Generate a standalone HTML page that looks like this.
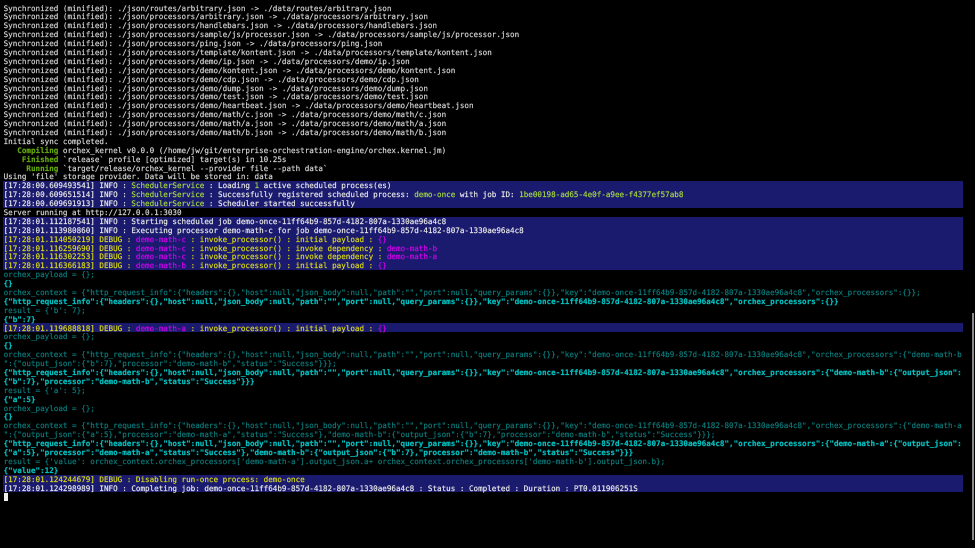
<!DOCTYPE html>
<html><head><meta charset="utf-8"><style>
html,body{margin:0;padding:0;background:#000;width:975px;height:548px;overflow:hidden}
#t{position:absolute;left:3.6px;top:4.5px;width:965px;font-family:"DejaVu Sans Mono","Liberation Mono",monospace;font-size:7.59px;line-height:8.9px;color:#d4d4d4;text-rendering:geometricPrecision;-webkit-text-stroke:.18px;filter:blur(.2px)}
#t div{height:8.9px;white-space:pre}
.bar{position:absolute;left:3px;width:960px;background:#1a1a6e}
.g{color:#62a80c;font-weight:bold}
.l{color:#a4d840}
.w{color:#e8e8e8}
.y{color:#dcdc14}
.m{color:#d400ee}
.d{color:#0b7c7c}
.c{color:#00c0c0;font-weight:bold}
</style></head><body>
<div class="bar" style="top:181px;height:26.7px"></div>
<div class="bar" style="top:216.6px;height:53.4px"></div>
<div class="bar" style="top:323px;height:8.9px"></div>
<div class="bar" style="top:474.5px;height:17.8px"></div>
<div style="position:absolute;left:4px;top:492.5px;width:4px;height:8.5px;background:#f0f0f0"></div>
<div style="position:absolute;left:972px;top:313px;width:1.5px;height:227px;background:#8a8a8a"></div>
<div id="t">
<div>Synchronized (minified): ./json/routes/arbitrary.json -&gt; ./data/routes/arbitrary.json</div>
<div>Synchronized (minified): ./json/processors/arbitrary.json -&gt; ./data/processors/arbitrary.json</div>
<div>Synchronized (minified): ./json/processors/handlebars.json -&gt; ./data/processors/handlebars.json</div>
<div>Synchronized (minified): ./json/processors/sample/js/processor.json -&gt; ./data/processors/sample/js/processor.json</div>
<div>Synchronized (minified): ./json/processors/ping.json -&gt; ./data/processors/ping.json</div>
<div>Synchronized (minified): ./json/processors/template/kontent.json -&gt; ./data/processors/template/kontent.json</div>
<div>Synchronized (minified): ./json/processors/demo/ip.json -&gt; ./data/processors/demo/ip.json</div>
<div>Synchronized (minified): ./json/processors/demo/kontent.json -&gt; ./data/processors/demo/kontent.json</div>
<div>Synchronized (minified): ./json/processors/demo/cdp.json -&gt; ./data/processors/demo/cdp.json</div>
<div>Synchronized (minified): ./json/processors/demo/dump.json -&gt; ./data/processors/demo/dump.json</div>
<div>Synchronized (minified): ./json/processors/demo/test.json -&gt; ./data/processors/demo/test.json</div>
<div>Synchronized (minified): ./json/processors/demo/heartbeat.json -&gt; ./data/processors/demo/heartbeat.json</div>
<div>Synchronized (minified): ./json/processors/demo/math/c.json -&gt; ./data/processors/demo/math/c.json</div>
<div>Synchronized (minified): ./json/processors/demo/math/a.json -&gt; ./data/processors/demo/math/a.json</div>
<div>Synchronized (minified): ./json/processors/demo/math/b.json -&gt; ./data/processors/demo/math/b.json</div>
<div>Initial sync completed.</div>
<div>   <span class="g">Compiling</span> orchex_kernel v0.0.0 (/home/jw/git/enterprise-orchestration-engine/orchex.kernel.jm)</div>
<div>    <span class="g">Finished</span> `release` profile [optimized] target(s) in 10.25s</div>
<div>     <span class="g">Running</span> `target/release/orchex_kernel --provider file --path data`</div>
<div>Using 'file' storage provider. Data will be stored in: data</div>
<div class="w">[17:28:00.609493541] INFO : <span class="l">SchedulerService</span> : Loading <span class="l">1</span> active scheduled process(es)</div>
<div class="w">[17:28:00.609651514] INFO : <span class="l">SchedulerService</span> : Successfully registered scheduled process: <span class="l">demo-once</span> with job ID: <span class="l">1be00198-ad65-4e0f-a9ee-f4377ef57ab8</span></div>
<div class="w">[17:28:00.609691913] INFO : <span class="l">SchedulerService</span> : Scheduler started successfully</div>
<div>Server running at http://127.0.0.1:3030</div>
<div class="w">[17:28:01.112187541] INFO : Starting scheduled job demo-once-11ff64b9-857d-4182-807a-1330ae96a4c8</div>
<div class="w">[17:28:01.113980860] INFO : Executing processor demo-math-c for job demo-once-11ff64b9-857d-4182-807a-1330ae96a4c8</div>
<div class="y">[17:28:01.114050219] DEBUG : <span class="m">demo-math-c</span> : invoke_processor() : initial payload : <span class="m">{}</span></div>
<div class="y">[17:28:01.116259690] DEBUG : <span class="m">demo-math-c</span> : invoke_processor() : invoke dependency : <span class="m">demo-math-b</span></div>
<div class="y">[17:28:01.116302253] DEBUG : <span class="m">demo-math-c</span> : invoke_processor() : invoke dependency : <span class="m">demo-math-a</span></div>
<div class="y">[17:28:01.116366183] DEBUG : <span class="m">demo-math-b</span> : invoke_processor() : initial payload : <span class="m">{}</span></div>
<div class="d">orchex_payload = {};</div>
<div class="c">{}</div>
<div class="d">orchex_context = {"http_request_info":{"headers":{},"host":null,"json_body":null,"path":"","port":null,"query_params":{}},"key":"demo-once-11ff64b9-857d-4182-807a-1330ae96a4c8","orchex_processors":{}};</div>
<div class="c">{"http_request_info":{"headers":{},"host":null,"json_body":null,"path":"","port":null,"query_params":{}},"key":"demo-once-11ff64b9-857d-4182-807a-1330ae96a4c8","orchex_processors":{}}</div>
<div class="d">result = {'b': 7};</div>
<div class="c">{"b":7}</div>
<div class="y">[17:28:01.119688818] DEBUG : <span class="m">demo-math-a</span> : invoke_processor() : initial payload : <span class="m">{}</span></div>
<div class="d">orchex_payload = {};</div>
<div class="c">{}</div>
<div class="d">orchex_context = {"http_request_info":{"headers":{},"host":null,"json_body":null,"path":"","port":null,"query_params":{}},"key":"demo-once-11ff64b9-857d-4182-807a-1330ae96a4c8","orchex_processors":{"demo-math-b</div>
<div class="d">":{"output_json":{"b":7},"processor":"demo-math-b","status":"Success"}}};</div>
<div class="c">{"http_request_info":{"headers":{},"host":null,"json_body":null,"path":"","port":null,"query_params":{}},"key":"demo-once-11ff64b9-857d-4182-807a-1330ae96a4c8","orchex_processors":{"demo-math-b":{"output_json":</div>
<div class="c">{"b":7},"processor":"demo-math-b","status":"Success"}}}</div>
<div class="d">result = {'a': 5};</div>
<div class="c">{"a":5}</div>
<div class="d">orchex_payload = {};</div>
<div class="c">{}</div>
<div class="d">orchex_context = {"http_request_info":{"headers":{},"host":null,"json_body":null,"path":"","port":null,"query_params":{}},"key":"demo-once-11ff64b9-857d-4182-807a-1330ae96a4c8","orchex_processors":{"demo-math-a</div>
<div class="d">":{"output_json":{"a":5},"processor":"demo-math-a","status":"Success"},"demo-math-b":{"output_json":{"b":7},"processor":"demo-math-b","status":"Success"}}};</div>
<div class="c">{"http_request_info":{"headers":{},"host":null,"json_body":null,"path":"","port":null,"query_params":{}},"key":"demo-once-11ff64b9-857d-4182-807a-1330ae96a4c8","orchex_processors":{"demo-math-a":{"output_json":</div>
<div class="c">{"a":5},"processor":"demo-math-a","status":"Success"},"demo-math-b":{"output_json":{"b":7},"processor":"demo-math-b","status":"Success"}}}</div>
<div class="d">result = {'value': orchex_context.orchex_processors['demo-math-a'].output_json.a+ orchex_context.orchex_processors['demo-math-b'].output_json.b};</div>
<div class="c">{"value":12}</div>
<div class="y">[17:28:01.124244679] DEBUG : Disabling run-once process: demo-once</div>
<div class="w">[17:28:01.124298989] INFO : Completing job: demo-once-11ff64b9-857d-4182-807a-1330ae96a4c8 : Status : Completed : Duration : PT0.011906251S</div>
</div>
</body></html>
